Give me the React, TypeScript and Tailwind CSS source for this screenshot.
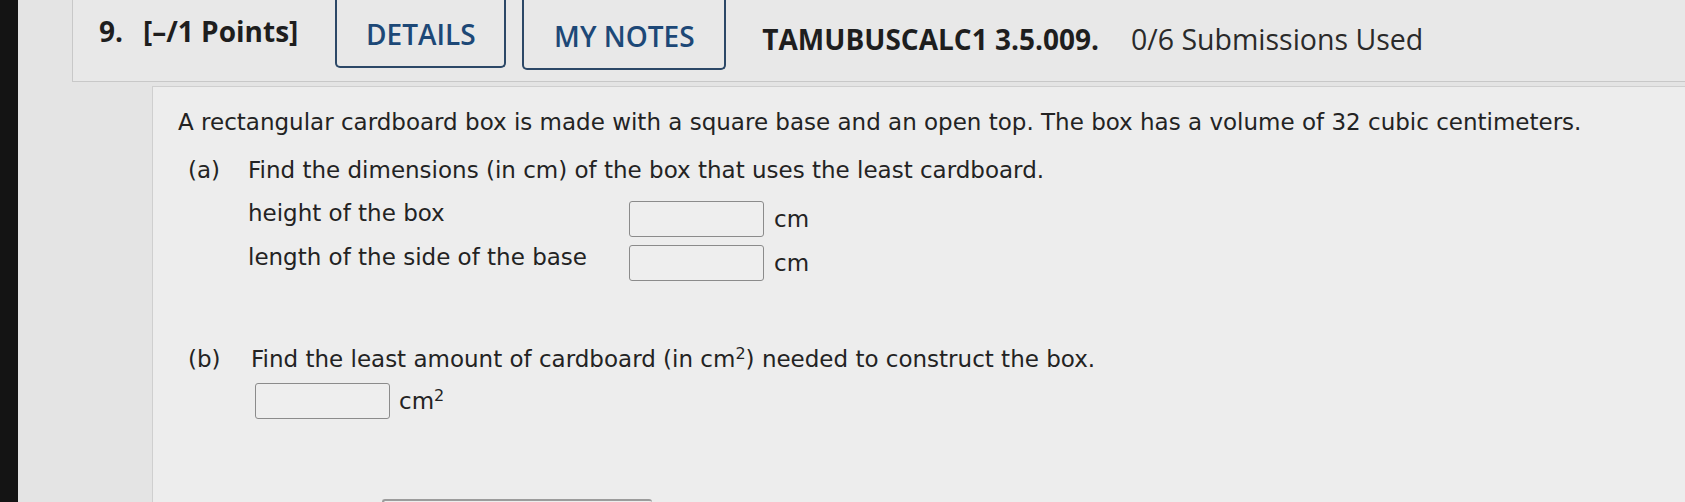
import React from 'react';

const sans = { fontFamily: '"DejaVu Sans", Verdana, sans-serif' };

function AnswerBox({ className = '' }: { className?: string }) {
  return (
    <div
      className={`h-[36px] w-[135px] shrink-0 rounded-[3px] border-[1.5px] border-[#8b8b8b] bg-[#eeeeee] ${className}`}
    />
  );
}

function AnswerRow({ label }: { label: string }) {
  return (
    <div className="flex items-start">
      <span className="-mt-[3px] w-[381px] shrink-0">{label}</span>
      <AnswerBox />
      <span className="ml-[10px] self-center">cm</span>
    </div>
  );
}

export default function App() {
  return (
    <div className="flex h-[502px] w-[1685px] overflow-hidden bg-[#e4e4e4] text-[#222]">
      {/* dark bezel on the left edge */}
      <div className="w-[18px] shrink-0 bg-[#141414]" />

      <div className="flex min-w-0 flex-1 flex-col">
        {/* Question header */}
        <div className="ml-[54px] flex h-[82px] shrink-0 items-start border-b border-l border-[#c8c8c8] bg-[#e8e8e8] pl-[26px] font-['Open_Sans',sans-serif]">
          <div className="mt-[14px] flex items-baseline text-[28px] font-bold leading-[34px] text-[#1e1e1e]">
            <span>9.</span>
            <span className="ml-[20px]">[–/1 Points]</span>
          </div>

          <button className="ml-[37px] h-[68px] w-[171px] rounded-b-[5px] border-2 border-t-0 border-[#2c4867] pt-[2px] text-[28px] font-semibold text-[#1d4877]">
            DETAILS
          </button>
          <button className="ml-[16px] h-[70px] w-[204px] rounded-b-[5px] border-2 border-t-0 border-[#2c4867] pt-[4px] text-[28px] font-semibold text-[#1d4877]">
            MY NOTES
          </button>

          <div className="ml-[36px] mt-[22px] flex items-baseline text-[28px] leading-[34px] text-[#1e1e1e]">
            <span className="font-bold">TAMUBUSCALC1 3.5.009.</span>
            <span className="ml-[32px] text-[28.5px] font-normal text-[#2a2a2a]">0/6 Submissions Used</span>
          </div>
        </div>

        {/* Question body */}
        <div
          className="relative ml-[134px] mt-[4px] flex-1 border-l border-t border-[#cfcfcf] bg-[#ededed] pl-[25px] pt-[20px] text-[23px] leading-[30px] text-[#232323]"
          style={sans}
        >
          <p>
            A rectangular cardboard box is made with a square base and an open top. The box has a volume of 32 cubic
            centimeters.
          </p>

          {/* part (a) */}
          <div className="mt-[18px] flex">
            <span className="ml-[10px] w-[60px] shrink-0">(a)</span>
            <div>
              <p>Find the dimensions (in cm) of the box that uses the least cardboard.</p>
              <div className="mt-[16px] flex flex-col gap-[8px]">
                <AnswerRow label="height of the box" />
                <AnswerRow label="length of the side of the base" />
              </div>
            </div>
          </div>

          {/* part (b) */}
          <div className="mt-[63px] flex">
            <span className="ml-[10px] w-[63px] shrink-0">(b)</span>
            <div>
              <p>
                Find the least amount of cardboard (in cm
                <sup className="text-[16px] leading-none">2</sup>) needed to construct the box.
              </p>
              <div className="mt-[9px] flex items-center">
                <AnswerBox className="ml-[4px]" />
                <span className="ml-[9px]">
                  cm<sup className="text-[16px] leading-none">2</sup>
                </span>
              </div>
            </div>
          </div>

          {/* top edge of the submit button below */}
          <div className="absolute left-[229px] top-[412px] h-[40px] w-[270px] rounded-[3px] border-l-2 border-t-2 border-[#9c9c9c]" />
        </div>
      </div>
    </div>
  );
}
